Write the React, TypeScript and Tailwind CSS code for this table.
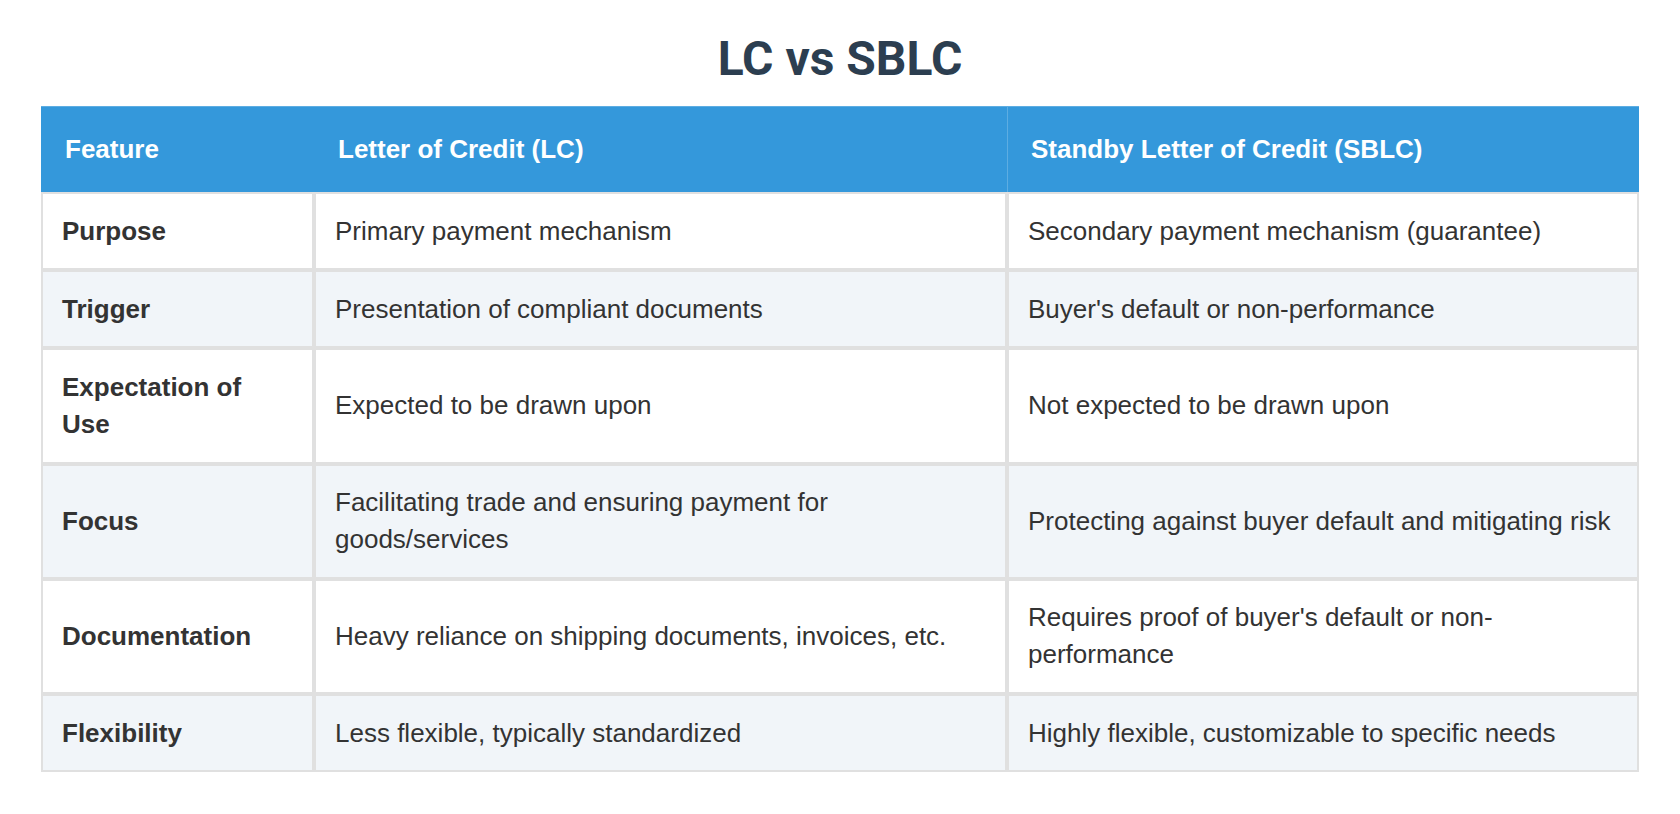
import React from "react";

const rows: [string, string, string][] = [
  ["Purpose", "Primary payment mechanism", "Secondary payment mechanism (guarantee)"],
  ["Trigger", "Presentation of compliant documents", "Buyer's default or non-performance"],
  ["Expectation of Use", "Expected to be drawn upon", "Not expected to be drawn upon"],
  ["Focus", "Facilitating trade and ensuring payment for goods/services", "Protecting against buyer default and mitigating risk"],
  ["Documentation", "Heavy reliance on shipping documents, invoices, etc.", "Requires proof of buyer's default or non-performance"],
  ["Flexibility", "Less flexible, typically standardized", "Highly flexible, customizable to specific needs"],
];

export default function App() {
  return (
    <div className="min-h-[814px] bg-white px-[41px] pt-[31px]">
      <h1 className="text-center text-[48px] leading-[56px] font-bold text-[#2c3e50] mb-[19px] [font-family:Roboto,'Liberation_Sans',sans-serif]">
        LC vs SBLC
      </h1>
      <table className="w-full table-fixed border-separate border-spacing-0 text-[26px] leading-[37px] text-[#333] [font-family:'Liberation_Sans',Arial,sans-serif]">
        <colgroup>
          <col className="w-[273px]" />
          <col className="w-[693px]" />
          <col className="w-[632px]" />
        </colgroup>
        <thead>
          <tr className="bg-[#3498db] text-white">
            <th className="border-t border-[#5dade2] px-[24px] py-[24px] text-left font-bold">Feature</th>
            <th className="border-t border-[#5dade2] px-[24px] py-[24px] text-left font-bold">Letter of Credit (LC)</th>
            <th className="border-t border-l border-[#5dade2] px-[23px] py-[24px] text-left font-bold">Standby Letter of Credit (SBLC)</th>
          </tr>
        </thead>
        <tbody>
          {rows.map((r, i) => (
            <tr key={r[0]} className={i % 2 === 1 ? "bg-[#f1f5f9]" : "bg-white"}>
              <td className="border-2 border-[#e0e0e0] px-[19px] py-[18.6px] align-middle font-bold">{r[0]}</td>
              <td className="border-2 border-[#e0e0e0] px-[19px] py-[18.6px] align-middle">{r[1]}</td>
              <td className="border-2 border-[#e0e0e0] px-[19px] py-[18.6px] align-middle">{r[2]}</td>
            </tr>
          ))}
        </tbody>
      </table>
    </div>
  );
}
